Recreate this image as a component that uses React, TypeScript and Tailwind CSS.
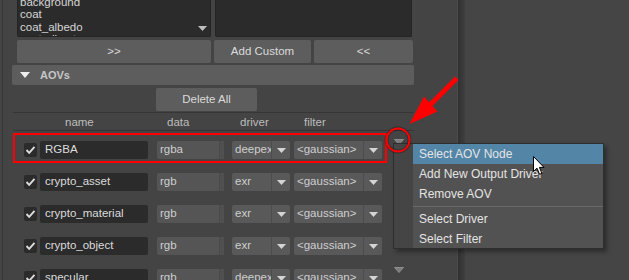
import React from "react";

function Tri({ w = 9, h = 5, color = "#d4d4d4" }: { w?: number; h?: number; color?: string }) {
  return (
    <svg width={w} height={h} viewBox={`0 0 ${w} ${h}`} className="block">
      <path d={`M0 0 H${w} L${w / 2} ${h} Z`} fill={color} />
    </svg>
  );
}

function RowTri() {
  return (
    <svg width="10" height="6" viewBox="0 0 10 6" className="block">
      <path d="M0.5 0.5 H9.5 L5 5.5 Z" fill="#7c7c7c" stroke="#9a9a9a" strokeWidth="0.8" />
    </svg>
  );
}

function Check() {
  return (
    <div className="flex h-[14px] w-[13px] items-center justify-center rounded-[2px] bg-[#2b2b2b]">
      <svg width="11" height="10" viewBox="0 0 11 10" className="block">
        <path d="M1.5 5 L4.2 7.8 L9.5 1.8" fill="none" stroke="#dcdcdc" strokeWidth="1.9" />
      </svg>
    </div>
  );
}

function Dropdown({ text, w, tw }: { text: string; w: number; tw: number }) {
  return (
    <div
      className="flex h-[18px] overflow-hidden rounded-[2px] bg-[#595959] text-[#cfcfcf]"
      style={{ width: w }}
    >
      <div className="flex shrink-0 items-center overflow-hidden whitespace-nowrap pl-[3px]" style={{ width: tw }}>
        {text}
      </div>
      <div className="w-[1px] shrink-0 bg-[#4d4d4d]" />
      <div className="flex flex-1 items-center justify-center">
        <Tri />
      </div>
    </div>
  );
}

function Row({ name, data, driver }: { name: string; data: string; driver: string }) {
  return (
    <div className="flex h-[32px] shrink-0 items-center pl-[12px]">
      <Check />
      <div className="ml-[3px] flex h-[18px] w-[108px] items-center rounded-[2px] bg-[#2b2b2b] pl-[5px] text-[#dcdcdc]">
        {name}
      </div>
      <div className="ml-[9px] flex h-[18px] w-[67px] overflow-hidden rounded-l-[2px] bg-[#555555] text-[#cfcfcf]">
        <div className="flex w-[62px] shrink-0 items-center pl-[3px]">{data}</div>
        <div className="w-[1px] shrink-0 bg-[#4a4a4a]" />
        <div className="flex-1 bg-[#505050]" />
      </div>
      <div className="ml-[8px]">
        <Dropdown text={driver} w={58} tw={39} />
      </div>
      <div className="ml-[4px]">
        <Dropdown text="<gaussian>" w={88} tw={69} />
      </div>
      <div className="ml-[12px] self-start pt-[5px]">
        <RowTri />
      </div>
    </div>
  );
}

const rows = [
  { name: "RGBA", data: "rgba", driver: "deepexr" },
  { name: "crypto_asset", data: "rgb", driver: "exr" },
  { name: "crypto_material", data: "rgb", driver: "exr" },
  { name: "crypto_object", data: "rgb", driver: "exr" },
  { name: "specular", data: "rgb", driver: "deepexr" },
];

export default function App() {
  return (
    <div className="relative flex h-[280px] w-[629px] overflow-hidden bg-[#444444] font-['Liberation_Sans',Arial,sans-serif] text-[11.5px] leading-none">
      <div className="w-[2px] shrink-0" />
      <div className="w-[1px] shrink-0 bg-[#373737]" />
      {/* left panel */}
      <div className="flex w-[454px] shrink-0 flex-col pl-[9px]">
        {/* lists */}
        <div className="ml-[5px] flex h-[37px] shrink-0 gap-[4px]">
          <div className="flex w-[194px] overflow-hidden rounded-b-[2px] border-x border-b border-[#242424] bg-[#2b2b2b]">
            <div className="flex flex-1 flex-col pl-[2px] leading-[12.5px] text-[#d6d6d6]">
              <div className="-mt-[4.5px] shrink-0">background</div>
              <div className="shrink-0">coat</div>
              <div className="shrink-0">coat_albedo</div>
              <div className="shrink-0">coat_direct</div>
            </div>
            <div className="flex w-[14px] flex-col justify-end pb-[5px] pl-[2px]">
              <Tri color="#bdbdbd" />
            </div>
          </div>
          <div className="w-[197px] rounded-b-[2px] border-x border-b border-[#242424] bg-[#2b2b2b]" />
        </div>
        {/* buttons */}
        <div className="ml-[5px] mt-[3px] flex h-[23px] shrink-0 gap-[3px] text-[#dadada]">
          <div className="flex w-[194px] items-center justify-center rounded-[2px] bg-[#5d5d5d]">&gt;&gt;</div>
          <div className="flex w-[97px] items-center justify-center rounded-[2px] bg-[#5d5d5d]">Add Custom</div>
          <div className="flex w-[99px] items-center justify-center rounded-[2px] bg-[#5d5d5d]">&lt;&lt;</div>
        </div>
        {/* header */}
        <div className="mt-[2px] flex h-[20px] w-[402px] shrink-0 items-center rounded-[2px] bg-[#5d5d5d] pl-[8px]">
          <Tri w={10} h={6} color="#eeeeee" />
          <span className="ml-[10px] text-[11px] font-bold text-[#c6c6c6]">AOVs</span>
        </div>
        {/* delete all */}
        <div className="ml-[144px] mt-[3px] flex h-[23px] w-[101px] shrink-0 items-center justify-center rounded-[2px] bg-[#5d5d5d] text-[#dadada]">
          Delete All
        </div>
        <div className="ml-[1px] mt-[1px] h-[1px] w-[401px] shrink-0 bg-[#363636]" />
        <div className="flex h-[17px] shrink-0 items-center pt-[3px] text-[#bdbdbd]">
          <div className="w-[53px]" />
          <div className="w-[102px]">name</div>
          <div className="w-[73px]">data</div>
          <div className="w-[64px]">driver</div>
          <div>filter</div>
        </div>
        <div className="ml-[1px] h-[1px] w-[401px] shrink-0 bg-[#363636]" />
        <div className="mt-[3px] flex shrink-0 flex-col">
          {rows.map((r) => (
            <Row key={r.name} {...r} />
          ))}
        </div>
      </div>
      {/* divider */}
      <div className="w-[1px] shrink-0 bg-[#4b4b4b]" />
      <div className="w-[7px] shrink-0 bg-gradient-to-r from-[#313131] to-[#3f3f3f]" />
      <div className="flex-1 bg-[#454545]" />

      {/* red rectangle annotation */}
      <div className="pointer-events-none absolute left-[13px] top-[133px] h-[30px] w-[374px] border-2 border-[#ff0000]" />

      {/* popup menu */}
      <div className="absolute left-[393px] top-[143px] flex h-[106px] w-[211px] border border-[#2e2e2e] shadow-[3px_3px_4px_rgba(0,0,0,0.35)]">
        <div className="w-[19px] shrink-0 bg-[#454545]" />
        <div className="flex flex-1 flex-col bg-[#525252] text-[12px] text-[#e4e4e4]">
          <div className="flex h-[20px] shrink-0 items-center bg-[#5285a6] pl-[6px]">Select AOV Node</div>
          <div className="flex h-[20px] shrink-0 items-center pl-[6px]">Add New Output Driver</div>
          <div className="flex h-[20px] shrink-0 items-center pl-[6px]">Remove AOV</div>
          <div className="flex h-[5px] shrink-0 items-center">
            <div className="h-[1px] w-full bg-[#6a6a6a]" />
          </div>
          <div className="flex h-[20px] shrink-0 items-center pl-[6px]">Select Driver</div>
          <div className="flex h-[20px] shrink-0 items-center pl-[6px]">Select Filter</div>
        </div>
      </div>

      {/* red circle */}
      <svg className="pointer-events-none absolute left-[384px] top-[126px]" width="28" height="28" viewBox="0 0 28 28">
        <circle cx="14" cy="14" r="11.5" fill="none" stroke="rgba(0,0,0,0.25)" strokeWidth="4" />
        <circle cx="14" cy="14" r="11.5" fill="none" stroke="#ff0000" strokeWidth="2" />
      </svg>

      {/* red arrow */}
      <svg className="pointer-events-none absolute left-[400px] top-[70px]" width="65" height="62" viewBox="400 70 65 62">
        <line x1="455" y1="80" x2="428" y2="107" stroke="#ff0000" strokeWidth="5" strokeLinecap="square" />
        <polygon points="409.5,124 424,96.5 437.5,111.5" fill="#ff0000" />
      </svg>

      {/* mouse cursor */}
      <svg className="pointer-events-none absolute left-[533px] top-[156px]" width="13" height="20" viewBox="0 0 13 20">
        <path
          d="M0.5 0.5 L0.5 15.5 L4 12.2 L6.6 18.3 L8.9 17.3 L6.4 11.4 L11 11.4 Z"
          fill="#ffffff"
          stroke="#000000"
          strokeWidth="1"
          strokeLinejoin="round"
        />
      </svg>
    </div>
  );
}
